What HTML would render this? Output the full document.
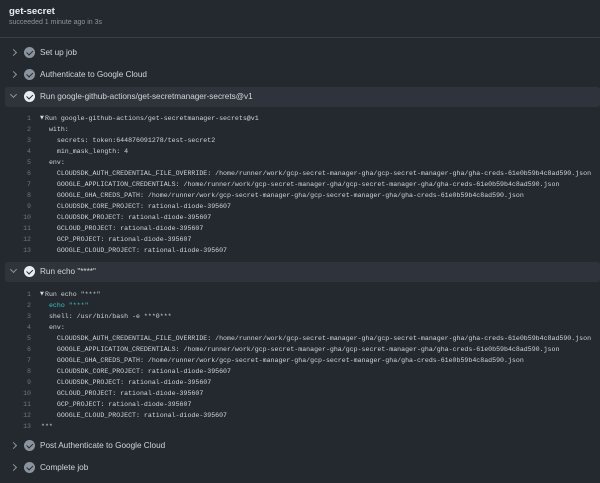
<!DOCTYPE html>
<html><head><style>
body{margin:0;width:600px;height:483px;background:#24292f;color:#d0d5db;font-family:"Liberation Sans",sans-serif;overflow:hidden;position:relative}
.h1{position:absolute;left:9px;top:6px;font-size:9.6px;font-weight:bold;color:#e6edf3}
.sub{position:absolute;left:9px;top:19px;font-size:7px;color:#8b949e}
.hr{position:absolute;left:0;right:0;top:37px;height:1px;background:#373e47}
.row{position:absolute;left:5px;right:0;height:20px;font-size:8.2px;color:#d0d5db}
.row.open{background:#2f343c;border-radius:3px}
.chev{position:absolute;left:6px;top:7px;width:4px;height:4px;border-right:1.2px solid #8b949e;border-bottom:1.2px solid #8b949e;transform:rotate(-45deg)}
.open .chev{transform:rotate(45deg);top:5px;left:6px}
.ic{position:absolute;left:19px;top:4px;width:11px;height:11px;border-radius:50%;background:#8b949e}
.open .ic{background:#e6edf3}
.ic:after{content:"";position:absolute;left:3.5px;top:2px;width:2.5px;height:4.5px;border-right:1.3px solid #24292f;border-bottom:1.3px solid #24292f;transform:rotate(45deg)}
.t{position:absolute;left:35px;top:5px;white-space:nowrap}
.log{position:absolute;left:0;width:600px;overflow:hidden;font-family:"Liberation Mono",monospace;font-size:6.6px;line-height:11px;color:#d0d5db}
.log div{height:11px;white-space:pre;position:relative;padding-left:45px}
.n{position:absolute;left:0;width:31px;text-align:right;color:#6e7681}
.tri{position:absolute;left:40px;top:0;font-size:5px;font-family:"DejaVu Sans",sans-serif}
.cy{color:#39c5cf}
</style></head><body>
<div class="h1">get-secret</div>
<div class="sub">succeeded 1 minute ago in 3s</div>
<div class="hr"></div>
<div class="row" style="top:43px"><div class="chev"></div><div class="ic"></div><div class="t">Set up job</div></div>
<div class="row" style="top:65px"><div class="chev"></div><div class="ic"></div><div class="t">Authenticate to Google Cloud</div></div>
<div class="row open" style="top:87px"><div class="chev"></div><div class="ic"></div><div class="t">Run google-github-actions/get-secretmanager-secrets@v1</div></div>
<div class="log" style="top:113px"><div><span class="n">1</span><span class="tri">▼</span>Run google-github-actions/get-secretmanager-secrets@v1</div><div><span class="n">2</span> with:</div><div><span class="n">3</span>   secrets: token:644876091278/test-secret2</div><div><span class="n">4</span>   min_mask_length: 4</div><div><span class="n">5</span> env:</div><div><span class="n">6</span>   CLOUDSDK_AUTH_CREDENTIAL_FILE_OVERRIDE: /home/runner/work/gcp-secret-manager-gha/gcp-secret-manager-gha/gha-creds-61e0b59b4c8ad590.json</div><div><span class="n">7</span>   GOOGLE_APPLICATION_CREDENTIALS: /home/runner/work/gcp-secret-manager-gha/gcp-secret-manager-gha/gha-creds-61e0b59b4c8ad590.json</div><div><span class="n">8</span>   GOOGLE_GHA_CREDS_PATH: /home/runner/work/gcp-secret-manager-gha/gcp-secret-manager-gha/gha-creds-61e0b59b4c8ad590.json</div><div><span class="n">9</span>   CLOUDSDK_CORE_PROJECT: rational-diode-395607</div><div><span class="n">10</span>   CLOUDSDK_PROJECT: rational-diode-395607</div><div><span class="n">11</span>   GCLOUD_PROJECT: rational-diode-395607</div><div><span class="n">12</span>   GCP_PROJECT: rational-diode-395607</div><div><span class="n">13</span>   GOOGLE_CLOUD_PROJECT: rational-diode-395607</div></div>
<div class="row open" style="top:262px"><div class="chev"></div><div class="ic"></div><div class="t">Run echo "****"</div></div>
<div class="log" style="top:289px"><div><span class="n">1</span><span class="tri">▼</span>Run echo "***"</div><div><span class="n">2</span> <span class="cy">echo "***"</span></div><div><span class="n">3</span> shell: /usr/bin/bash -e ***0***</div><div><span class="n">4</span> env:</div><div><span class="n">5</span>   CLOUDSDK_AUTH_CREDENTIAL_FILE_OVERRIDE: /home/runner/work/gcp-secret-manager-gha/gcp-secret-manager-gha/gha-creds-61e0b59b4c8ad590.json</div><div><span class="n">6</span>   GOOGLE_APPLICATION_CREDENTIALS: /home/runner/work/gcp-secret-manager-gha/gcp-secret-manager-gha/gha-creds-61e0b59b4c8ad590.json</div><div><span class="n">7</span>   GOOGLE_GHA_CREDS_PATH: /home/runner/work/gcp-secret-manager-gha/gcp-secret-manager-gha/gha-creds-61e0b59b4c8ad590.json</div><div><span class="n">8</span>   CLOUDSDK_CORE_PROJECT: rational-diode-395607</div><div><span class="n">9</span>   CLOUDSDK_PROJECT: rational-diode-395607</div><div><span class="n">10</span>   GCLOUD_PROJECT: rational-diode-395607</div><div><span class="n">11</span>   GCP_PROJECT: rational-diode-395607</div><div><span class="n">12</span>   GOOGLE_CLOUD_PROJECT: rational-diode-395607</div><div><span class="n">13</span><span style="margin-left:-4px">***</span></div></div>
<div class="row" style="top:436px"><div class="chev"></div><div class="ic"></div><div class="t">Post Authenticate to Google Cloud</div></div>
<div class="row" style="top:458px"><div class="chev"></div><div class="ic"></div><div class="t">Complete job</div></div>
</body></html>
